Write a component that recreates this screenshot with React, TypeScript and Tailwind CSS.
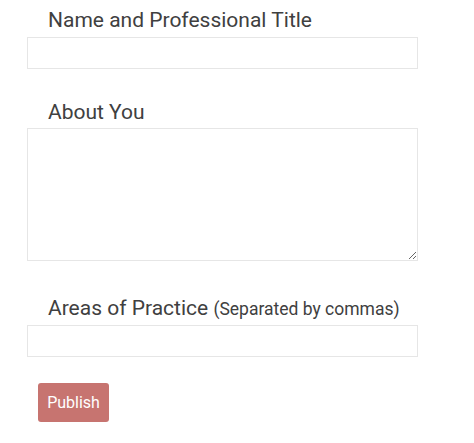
export default function App() {
  return (
    <div className="w-[474px] h-[443px] bg-white" style={{ fontFamily: "Roboto, 'Liberation Sans', sans-serif" }}>
      <div className="pt-[8px] pl-[27px] w-[418px]">
        <label className="block pl-[21px] text-[21px] leading-[24px] text-[#404040] mb-[5px]">Name and Professional Title</label>
        <input className="block w-[391px] h-[32px] border border-[#e6e6e6] bg-white outline-none" />
        <label className="block pl-[21px] text-[21px] leading-[24px] text-[#404040] mt-[31px] mb-[4px]">About You</label>
        <textarea className="block w-[391px] h-[133px] border border-[#e6e6e6] bg-white outline-none" />
        <label className="block pl-[21px] text-[21px] leading-[24px] text-[#404040] mt-[35px] mb-[4px]">
          Areas of Practice <span className="text-[17.5px]">(Separated by commas)</span>
        </label>
        <input className="block w-[391px] h-[32px] border border-[#e6e6e6] bg-white outline-none" />
        <button className="block ml-[11px] mt-[26px] w-[71px] h-[39px] rounded-[3px] bg-[#c77470] text-white text-[16px]">Publish</button>
      </div>
    </div>
  );
}
